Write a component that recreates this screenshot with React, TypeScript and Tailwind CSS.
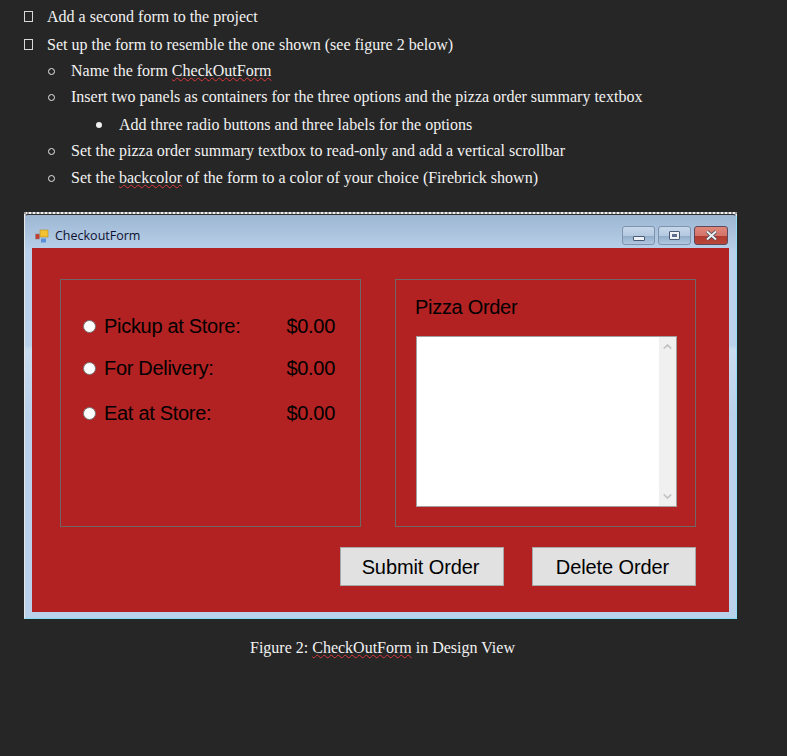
import React from "react";
import { ChevronUp, ChevronDown } from "lucide-react";

interface ListRow {
  level: number;
  marker: string;
  height: string;
  content: React.ReactNode;
}

const Squiggle = ({ children }: { children: React.ReactNode }) => (
  <span className="underline decoration-wavy decoration-[#d9383c] decoration-1 underline-offset-1">{children}</span>
);

const rows: ListRow[] = [
  { level: 0, marker: "box", height: "h-[28px]", content: "Add a second form to the project" },
  { level: 0, marker: "box", height: "h-[27px]", content: "Set up the form to resemble the one shown (see figure 2 below)" },
  { level: 1, marker: "ring", height: "h-[26px]", content: <>Name the form <Squiggle>CheckOutForm</Squiggle></> },
  { level: 1, marker: "ring", height: "h-[26px]", content: "Insert two panels as containers for the three options and the pizza order summary textbox" },
  { level: 2, marker: "dot", height: "h-[29px]", content: "Add three radio buttons and three labels for the options" },
  { level: 1, marker: "ring", height: "h-[24px]", content: "Set the pizza order summary textbox to read-only and add a vertical scrollbar" },
  { level: 1, marker: "ring", height: "h-[30px]", content: <>Set the <Squiggle>backcolor</Squiggle> of the form to a color of your choice (Firebrick shown)</> },
];

const options = [
  { label: "Pickup at Store:", height: "h-[42px]" },
  { label: "For Delivery:", height: "h-[42px]" },
  { label: "Eat at Store:", height: "h-[48px]" },
];

function Marker({ kind }: { kind: string }) {
  if (kind === "box") return <span className="-mt-[1px] block h-[11px] w-[9px] border border-[#d8d8d8]" />;
  if (kind === "ring") return <span className="block h-[7px] w-[7px] rounded-full border border-[#e8e8e8]" />;
  return <span className="block h-[6px] w-[6px] rounded-full bg-[#f0f0f0]" />;
}

function DocRow({ row }: { row: ListRow }) {
  const indent = row.level === 0 ? "pl-[24px]" : row.level === 1 ? "pl-[48px]" : "pl-[96px]";
  return (
    <div className={`flex items-center ${indent} ${row.height}`}>
      <span className="flex w-[23px] shrink-0 items-center">
        <Marker kind={row.marker} />
      </span>
      <span className="whitespace-nowrap">{row.content}</span>
    </div>
  );
}

function CaptionButton({ kind }: { kind: string }) {
  if (kind === "close") {
    return (
      <div className="flex h-[19px] w-[34px] items-center justify-center rounded-[3px] border border-[#5c4a5c] bg-[linear-gradient(#e0877a_0%,#d4746a_50%,#b03a2e_55%,#b8473a_100%)]">
        <svg width="13" height="11" viewBox="0 0 13 11">
          <path d="M2 1.5 L11 9.5 M11 1.5 L2 9.5" stroke="#3f4a5c" strokeWidth="3.6" />
          <path d="M2 1.5 L11 9.5 M11 1.5 L2 9.5" stroke="#f0f0f0" strokeWidth="2" />
        </svg>
      </div>
    );
  }
  return (
    <div className="flex h-[19px] w-[33px] items-center justify-center rounded-[3px] border border-[#7f93ad] bg-[linear-gradient(#c6d7ea_0%,#b4c9e0_50%,#93aecb_55%,#b0c8e0_100%)]">
      {kind === "min" ? (
        <span className="mt-[6px] block h-[5px] w-[12px] rounded-[1px] border border-[#4a5a72] bg-[#eef2f6]" />
      ) : (
        <span className="flex h-[9px] w-[11px] items-center justify-center rounded-[1px] border border-[#4a5a72] bg-[#eef2f6]">
          <span className="block h-[3px] w-[5px] bg-[#5d6f8a]" />
        </span>
      )}
    </div>
  );
}

function OrderButton({ label }: { label: string }) {
  return (
    <button className="flex h-[39px] w-[164px] items-center justify-center border border-[#a8a8a8] bg-[#e1e1e1] pr-[3px] text-[20px] tracking-[-0.1px] text-black">
      {label}
    </button>
  );
}

export default function App() {
  return (
    <div className="h-[756px] w-[787px] overflow-hidden bg-[#262626] font-['Liberation_Serif',serif] text-[16px] text-[#f2f2f2]">
      <div className="pt-[3px]">
        {rows.map((row, i) => (
          <DocRow key={i} row={row} />
        ))}
      </div>

      {/* screenshot of the form */}
      <div className="ml-[24px] mt-[19px] w-[713px] border-t-[2px] border-dotted border-t-[#9a9a9a] bg-[#f0f0f0] font-['Liberation_Sans',sans-serif]">
        <div className="rounded-tl-[4px] rounded-tr-[4px] border-x border-b border-t border-l-[#e6e6e6] border-r-[#8fe0f5] border-b-[#7fdcf5] border-t-[#2e2e2e] bg-[linear-gradient(#9db6d2_0px,#b9d1ea_36px,#b9d1ea_130px,#c9dcf0_135px,#b9d1ea_200px)] px-[7px] pb-[6px]">
          <div className="flex h-[33px] items-center justify-between pt-[9px] pr-[1px]">
            <div className="flex items-center gap-[6px] pl-[3px]">
              <svg width="14" height="14" viewBox="0 0 14 14">
                <rect x="0.5" y="5" width="4" height="5" fill="#c9382c" stroke="#8a8a8a" strokeWidth="0.6" />
                <rect x="5" y="1" width="8" height="7" fill="#f2c230" stroke="#b88a20" strokeWidth="0.6" />
                <rect x="6" y="9.5" width="5" height="4" fill="#5a8fdc" />
              </svg>
              <span className="font-['Open_Sans',sans-serif] text-[12.5px] text-[#101030]">CheckoutForm</span>
            </div>
            <div className="-mt-[2px] flex gap-[3px]">
              <CaptionButton kind="min" />
              <CaptionButton kind="max" />
              <CaptionButton kind="close" />
            </div>
          </div>

          <div className="h-[364px] bg-[#b22222] px-[28px] pt-[31px] text-black">
            <div className="flex gap-[34px]">
              <div className="h-[248px] w-[301px] border border-[#706666] pl-[22px] pr-[25px] pt-[25px]">
                {options.map((o) => (
                  <div key={o.label} className={`flex items-center justify-between text-[20px] ${o.height}`}>
                    <div className="flex items-center gap-[8px]">
                      <span className="block h-[13px] w-[13px] rounded-full border border-[#777] bg-white" />
                      <span className="tracking-[-0.3px]">{o.label}</span>
                    </div>
                    <span className="tracking-[-0.3px]">$0.00</span>
                  </div>
                ))}
              </div>

              <div className="h-[248px] w-[301px] border border-[#706666] pl-[20px] pr-[18px] pt-[15px]">
                <div className="-ml-[1px] h-[41px] text-[20px] leading-[24px] tracking-[-0.3px]">Pizza Order</div>
                <div className="flex h-[171px] w-[261px] justify-end border border-[#a0a0a0] bg-white">
                  <div className="flex w-[17px] flex-col items-center justify-between bg-[#f0f0f0] py-[3px] text-[#c4c4c4]">
                    <ChevronUp size={13} strokeWidth={3} />
                    <ChevronDown size={13} strokeWidth={3} />
                  </div>
                </div>
              </div>
            </div>

            <div className="mt-[20px] flex justify-end gap-[28px] pr-[5px]">
              <OrderButton label="Submit Order" />
              <OrderButton label="Delete Order" />
            </div>
          </div>
        </div>
      </div>

      <div className="mt-[19px] pl-[250px] leading-[20px]">
        Figure 2: <Squiggle>CheckOutForm</Squiggle> in Design View
      </div>
    </div>
  );
}
